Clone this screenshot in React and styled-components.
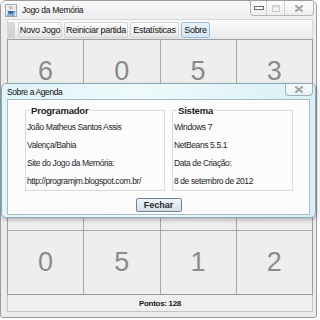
import styled, { createGlobalStyle } from 'styled-components'

const sans = `"Liberation Sans", Arial, sans-serif`

const GlobalStyle = createGlobalStyle`
  html, body {
    margin: 0;
    padding: 0;
    background: #ffffff;
  }
  body {
    width: 320px;
    height: 320px;
    overflow: hidden;
    font-family: ${sans};
  }
`

const Page = styled.div`
  position: relative;
  width: 320px;
  height: 320px;
`

const Window = styled.div`
  box-sizing: border-box;
  width: 317px;
  height: 318px;
  border: 1px solid #9b9b9b;
  border-radius: 6px 6px 3px 3px;
  background: #ececec;
  display: flex;
  flex-direction: column;
`

const TitleBar = styled.div`
  height: 19px;
  display: flex;
  align-items: center;
  padding-left: 4px;
  background: linear-gradient(#f9f9f9, #efefef);
  border-radius: 5px 5px 0 0;
`

const WindowTitle = styled.span`
  margin-left: 5px;
  font-size: 8.5px;
  letter-spacing: -0.3px;
  color: #111111;
`

const Controls = styled.div`
  margin-left: auto;
  margin-right: 2px;
  align-self: flex-start;
  display: flex;
  height: 14px;
  border: 1px solid #b4b4b4;
  border-top: none;
  border-radius: 0 0 4px 4px;
  background: linear-gradient(#fbfbfb, #eeeeee);
  overflow: hidden;
`

const ControlButton = styled.div`
  width: ${p => p.w}px;
  display: flex;
  align-items: center;
  justify-content: center;
  border-left: ${p => (p.first ? 'none' : '1px solid #d0d0d0')};
`

const Body = styled.div`
  flex: 1;
  display: flex;
  flex-direction: column;
  padding: 0 3px 5px 6px;
`

const Toolbar = styled.div`
  box-sizing: border-box;
  height: 20px;
  display: flex;
  align-items: center;
  gap: 2px;
  border: 1px solid #d6d6d6;
  border-bottom: none;
  background: linear-gradient(#fbfbfb, #e9e9e9);
`

const Gripper = styled.div`
  width: 7px;
  height: 16px;
  margin-right: 1px;
  background-image: radial-gradient(circle, #9a9a9a 0.6px, transparent 0.8px);
  background-size: 2px 2px;
  opacity: 0.7;
`

const ToolButton = styled.div`
  box-sizing: border-box;
  width: ${p => p.w}px;
  height: 16px;
  display: flex;
  align-items: center;
  justify-content: center;
  font-size: 9px;
  letter-spacing: -0.3px;
  color: #111111;
  white-space: nowrap;
  border: 1px solid ${p => (p.active ? '#9dbbe0' : '#d2d2d2')};
  border-radius: 2px;
  background: ${p =>
    p.active ? 'linear-gradient(#e8f2fc, #d5e6f8)' : 'linear-gradient(#fdfdfd, #e6e6e6)'};
`

const Board = styled.div`
  box-sizing: border-box;
  height: 256px;
  display: grid;
  grid-template-columns: repeat(4, 1fr);
  grid-template-rows: repeat(4, 1fr);
  gap: 1px;
  border: 1px solid #9e9e9e;
  background: #a8a8a8;
`

const Card = styled.div`
  display: flex;
  align-items: center;
  justify-content: center;
  background: #eeeeee;
  font-size: 27px;
  color: #8b8b8b;
`

const StatusBar = styled.div`
  box-sizing: border-box;
  height: 17px;
  display: flex;
  align-items: center;
  justify-content: center;
  border: 1px solid #c4c4c4;
  border-top: none;
  background: #efefef;
  font-size: 8px;
  letter-spacing: -0.3px;
  font-weight: bold;
  color: #1a1a1a;
`

const Dialog = styled.div`
  position: absolute;
  left: 1px;
  top: 83px;
  box-sizing: border-box;
  width: 315px;
  height: 135px;
  border: 1px solid #8aa9b8;
  border-radius: 5px;
  background: linear-gradient(100deg, #dff3f8, #eefafc 40%, #d8eff5);
  box-shadow: 1px 2px 4px rgba(0, 0, 0, 0.25);
  display: flex;
  flex-direction: column;
  padding: 0 5px 2px 5px;
`

const DialogTitle = styled.div`
  position: relative;
  height: 15px;
  display: flex;
  align-items: center;
  font-size: 8.5px;
  letter-spacing: -0.4px;
  color: #111111;
`

const DialogClose = styled.div`
  position: absolute;
  right: -3px;
  top: 0;
  width: 28px;
  height: 12px;
  box-sizing: border-box;
  border: 1px solid #9fb3bd;
  border-top: none;
  border-radius: 0 0 4px 4px;
  background: linear-gradient(#f6fbfc, #e6f1f4);
  display: flex;
  align-items: center;
  justify-content: center;
`

const DialogContent = styled.div`
  flex: 1;
  box-sizing: border-box;
  border: 1px solid #a7bcc6;
  background: #fcfcfc;
  display: flex;
  flex-direction: column;
  align-items: center;
  padding-top: 4px;
`

const Panels = styled.div`
  display: flex;
  gap: 7px;
  margin-left: 1px;
`

const Panel = styled.fieldset`
  box-sizing: border-box;
  flex: 0 0 ${p => p.w}px;
  width: ${p => p.w}px;
  margin: 0;
  padding: 1px 0 0 1px;
  min-width: 0;
  min-inline-size: 0;
  overflow: hidden;
  border: 1px solid #d3dde2;
`

const Legend = styled.legend`
  margin-left: 3px;
  padding: 0 1px;
  font-size: 9.5px;
  letter-spacing: -0.2px;
  line-height: 13px;
  font-weight: bold;
  color: #1c1c1c;
`

const Line = styled.div`
  height: 18px;
  line-height: 18px;
  font-size: 8.5px;
  letter-spacing: -0.4px;
  color: #262626;
  white-space: nowrap;
`

const CloseButton = styled.div`
  box-sizing: border-box;
  width: 46px;
  height: 14px;
  margin-top: 7px;
  display: flex;
  align-items: center;
  justify-content: center;
  border: 1px solid #6f849c;
  border-radius: 2px;
  background: linear-gradient(#f1f5fa, #d3dde9);
  font-size: 9px;
  font-weight: bold;
  color: #2a2a2a;
`

function JavaIcon() {
  return (
    <svg width="12" height="13" viewBox="0 0 12 13">
      <rect x="0.5" y="0.5" width="11" height="12" fill="#e8eef6" stroke="#9aa8b8" />
      <path d="M5 2 C3.5 3.5 6.5 4 5 5.5 M7 2.5 C6 3.5 8 4 7 5" stroke="#e07a1f" strokeWidth="1" fill="none" />
      <path d="M2.5 7 L9 7 L8 10 L3.5 10 Z" fill="#3a6fb0" />
      <path d="M9 7.5 C10.5 7.5 10.5 9 8.7 9" stroke="#3a6fb0" fill="none" />
      <rect x="2" y="10.5" width="8" height="1" fill="#3a6fb0" />
    </svg>
  )
}

function CloseGlyph() {
  return (
    <svg width="8" height="7" viewBox="0 0 8 7">
      <path d="M0.5 0.5 L7.5 6.5 M7.5 0.5 L0.5 6.5" stroke="#7a7a7a" strokeWidth="1.6" />
      <path d="M0.5 0.5 L7.5 6.5 M7.5 0.5 L0.5 6.5" stroke="#f4f4f4" strokeWidth="0.5" />
    </svg>
  )
}

const top = ['6', '0', '5', '3']
const bottom = ['0', '5', '1', '2']
const hidden = ['', '', '', '', '', '', '', '']

export default function App() {
  const cards = [...top, ...hidden, ...bottom]

  return (
    <Page>
      <GlobalStyle />
      <Window>
        <TitleBar>
          <JavaIcon />
          <WindowTitle>Jogo da Memória</WindowTitle>
          <Controls>
            <ControlButton w={15} first>
              <svg width="10" height="4" viewBox="0 0 10 4">
                <rect x="0.5" y="0.5" width="9" height="3" fill="#fff" stroke="#6b6b6b" />
              </svg>
            </ControlButton>
            <ControlButton w={17}>
              <svg width="8" height="7" viewBox="0 0 8 7">
                <rect x="0.5" y="0.5" width="7" height="6" fill="none" stroke="#c8c8c8" />
                <rect x="0.5" y="0.5" width="7" height="2" fill="#d8d8d8" />
              </svg>
            </ControlButton>
            <ControlButton w={28}>
              <CloseGlyph />
            </ControlButton>
          </Controls>
        </TitleBar>
        <Body>
          <Toolbar>
            <Gripper />
            <ToolButton w={44}>Novo Jogo</ToolButton>
            <ToolButton w={64}>Reiniciar partida</ToolButton>
            <ToolButton w={49}>Estatísticas</ToolButton>
            <ToolButton w={29} active>Sobre</ToolButton>
          </Toolbar>
          <Board>
            {cards.map((value, i) => (
              <Card key={i}>{value}</Card>
            ))}
          </Board>
          <StatusBar>Pontos: 128</StatusBar>
        </Body>
      </Window>

      <Dialog>
        <DialogTitle>
          Sobre a Agenda
          <DialogClose>
            <CloseGlyph />
          </DialogClose>
        </DialogTitle>
        <DialogContent>
          <Panels>
            <Panel w={140}>
              <Legend>Programador</Legend>
              <Line>João Matheus Santos Assis</Line>
              <Line>Valença/Bahia</Line>
              <Line>Site do Jogo da Memória:</Line>
              <Line>http://programjm.blogspot.com.br/</Line>
            </Panel>
            <Panel w={121}>
              <Legend>Sistema</Legend>
              <Line>Windows 7</Line>
              <Line>NetBeans 5.5.1</Line>
              <Line>Data de Criação:</Line>
              <Line>8 de setembro de 2012</Line>
            </Panel>
          </Panels>
          <CloseButton>Fechar</CloseButton>
        </DialogContent>
      </Dialog>
    </Page>
  )
}
